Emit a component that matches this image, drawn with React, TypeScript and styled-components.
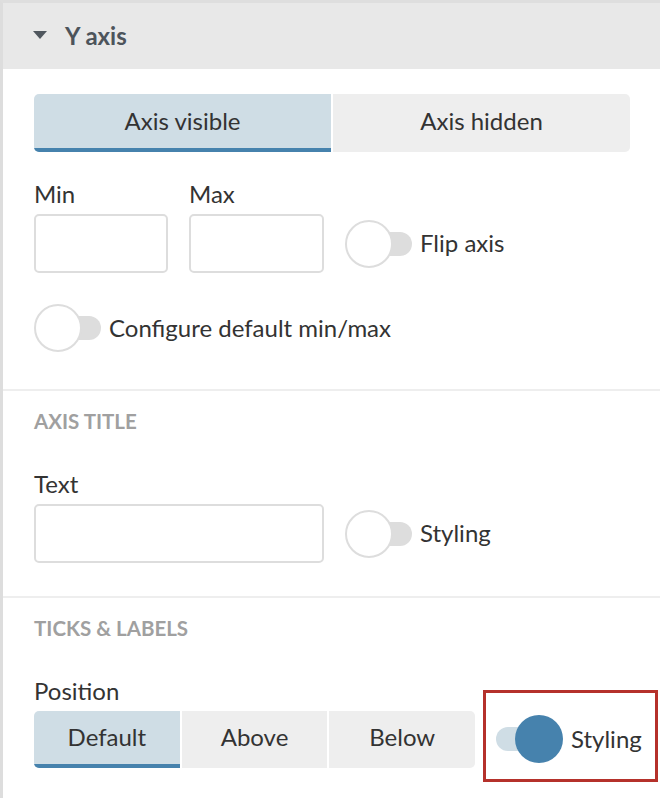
import styled, { createGlobalStyle } from "styled-components";

const GlobalStyle = createGlobalStyle`
  html, body {
    margin: 0;
    padding: 0;
    background: #fff;
  }
  body {
    font-family: Lato, "Open Sans", sans-serif;
    color: #333;
  }
`;

const Panel = styled.div`
  width: 657px;
  height: 795px;
  border-left: 3px solid #dddddd;
  border-top: 3px solid #dedede;
  overflow: hidden;
`;

const Header = styled.div`
  height: 66px;
  background: #e8e8e8;
  display: flex;
  align-items: center;
  gap: 18px;
  padding-left: 30px;
  padding-bottom: 2px;
  box-sizing: border-box;
`;

const Caret = styled.span`
  width: 0;
  height: 0;
  border-left: 7px solid transparent;
  border-right: 7px solid transparent;
  border-top: 8px solid #50575e;
`;

const HeaderTitle = styled.span`
  font-size: 24px;
  font-weight: 700;
  color: #4d545b;
`;

const Section = styled.div<{ $top: number; $bottom: number }>`
  padding: ${(p) => p.$top}px 31px ${(p) => p.$bottom}px;
  border-bottom: 2px solid #eeeeee;
  &:last-child {
    border-bottom: none;
  }
`;

const SectionTitle = styled.div`
  font-size: 20.5px;
  line-height: 24px;
  font-weight: 700;
  color: #a0a0a0;
  margin-bottom: 37px;
`;

const Segmented = styled.div<{ $width: number; $height: number }>`
  display: flex;
  gap: 2px;
  width: ${(p) => p.$width}px;
  height: ${(p) => p.$height}px;
  border-radius: 5px;
  overflow: hidden;
  flex: none;
`;

const Segment = styled.div<{ $active?: boolean }>`
  flex: 1;
  display: flex;
  align-items: center;
  justify-content: center;
  padding-bottom: 6px;
  font-size: 24px;
  color: #333;
  background: ${(p) => (p.$active ? "#cfdde5" : "#eeeeee")};
  box-shadow: ${(p) => (p.$active ? "inset 0 -4px 0 #4682ad" : "none")};
`;

const Row = styled.div<{ $gap: number; $top?: number }>`
  display: flex;
  align-items: flex-end;
  gap: ${(p) => p.$gap}px;
  margin-top: ${(p) => p.$top ?? 0}px;
`;

const Field = styled.div`
  display: flex;
  flex-direction: column;
  gap: 6px;
  flex: none;
`;

const Label = styled.label`
  font-size: 24px;
  line-height: 28px;
  color: #333;
`;

const Input = styled.input<{ $width: number }>`
  box-sizing: border-box;
  width: ${(p) => p.$width}px;
  height: 59px;
  border: 2px solid #dddddd;
  border-radius: 5px;
  outline: none;
  font: inherit;
`;

const ToggleWrap = styled.div<{ $height?: number }>`
  display: flex;
  align-items: center;
  gap: 8px;
  flex: none;
  height: ${(p) => (p.$height ? `${p.$height}px` : "auto")};
`;

const Switch = styled.div`
  position: relative;
  width: 67px;
  height: 48px;
  flex: none;
`;

const Track = styled.div<{ $on?: boolean }>`
  position: absolute;
  top: 12px;
  left: ${(p) => (p.$on ? "0" : "7px")};
  width: 60px;
  height: 24px;
  border-radius: 12px;
  background: ${(p) => (p.$on ? "#cfdde5" : "#dddddd")};
`;

const Knob = styled.div<{ $on?: boolean }>`
  position: absolute;
  top: 0;
  ${(p) => (p.$on ? "right: 0;" : "left: 0;")}
  box-sizing: border-box;
  width: 48px;
  height: 48px;
  border-radius: 50%;
  background: ${(p) => (p.$on ? "#4682ad" : "#ffffff")};
  border: ${(p) => (p.$on ? "none" : "2px solid #dddddd")};
`;

const ToggleText = styled.span`
  font-size: 24px;
  color: #333;
  margin-top: -2px;
`;

const Highlight = styled.div`
  box-sizing: border-box;
  flex: none;
  width: 175px;
  height: 92px;
  margin-bottom: -14px;
  border: 3px solid #b5312b;
  padding: 6px 0 0 10px;
  display: flex;
  align-items: center;
`;

function Toggle({ label, on, height }: { label: string; on?: boolean; height?: number }) {
  return (
    <ToggleWrap $height={height}>
      <Switch>
        <Track $on={on} />
        <Knob $on={on} />
      </Switch>
      <ToggleText>{label}</ToggleText>
    </ToggleWrap>
  );
}

export default function App() {
  return (
    <>
      <GlobalStyle />
      <Panel>
        <Header>
          <Caret />
          <HeaderTitle>Y axis</HeaderTitle>
        </Header>

        <Section $top={25} $bottom={37}>
          <Segmented $width={596} $height={58}>
            <Segment $active>Axis visible</Segment>
            <Segment>Axis hidden</Segment>
          </Segmented>
          <Row $gap={21} $top={28}>
            <Field>
              <Label>Min</Label>
              <Input $width={134} />
            </Field>
            <Field>
              <Label>Max</Label>
              <Input $width={135} />
            </Field>
            <Toggle label="Flip axis" height={59} />
          </Row>
          <Row $gap={0} $top={31}>
            <Toggle label="Configure default min/max" />
          </Row>
        </Section>

        <Section $top={18} $bottom={33}>
          <SectionTitle>AXIS TITLE</SectionTitle>
          <Row $gap={21}>
            <Field>
              <Label>Text</Label>
              <Input $width={290} />
            </Field>
            <Toggle label="Styling" height={59} />
          </Row>
        </Section>

        <Section $top={18} $bottom={0}>
          <SectionTitle>TICKS &amp; LABELS</SectionTitle>
          <Row $gap={8}>
            <Field>
              <Label>Position</Label>
              <Segmented $width={441} $height={57}>
                <Segment $active>Default</Segment>
                <Segment>Above</Segment>
                <Segment>Below</Segment>
              </Segmented>
            </Field>
            <Highlight>
              <Toggle label="Styling" on />
            </Highlight>
          </Row>
        </Section>
      </Panel>
    </>
  );
}
